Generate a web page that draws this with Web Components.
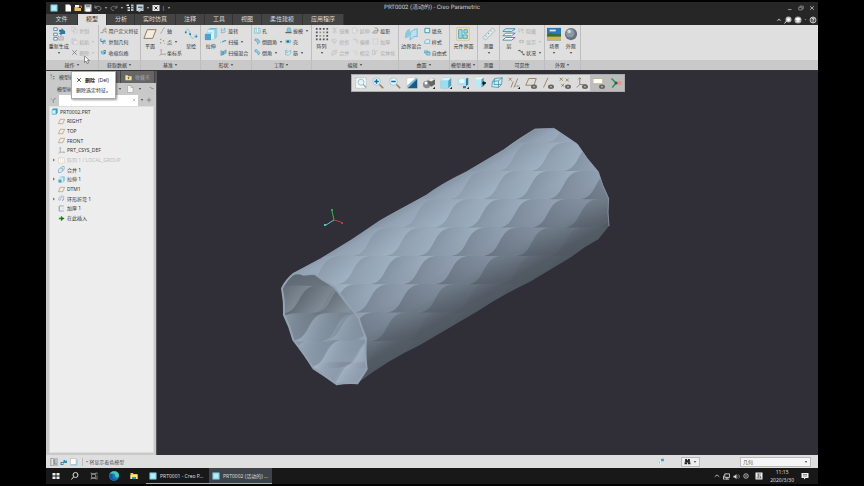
<!DOCTYPE html>
<html lang="zh-CN">
<head>
<meta charset="utf-8">
<title>PRT0002 (活动的) - Creo Parametric</title>
<style>
  html, body { margin: 0; height: 100%; background: #000; }
  body { font: 5px/8px "Noto Sans", "Noto Sans CJK SC", sans-serif; color: #333; }
</style>
</head>
<body>
<creo-app></creo-app>

<script>
// All icons share a 16x16 box.
const CUBE = '<path d="M1 5l4-4h10v10l-4 4H1z" fill="#4fa3c4"/><path d="M1 5l4-4h10l-4 4z" fill="#d9f3fa"/><path d="M1 5h10v10H1z" fill="#9adcf0"/>';
const EYE = '<ellipse cx="12" cy="13" rx="4" ry="3" fill="#666"/><circle cx="12" cy="13" r="1" fill="#ddd"/>';
const CORNER = '<path d="M16 13v3h-3z" fill="#222"/>';

const ICONS = {
  app: '<rect x="1" y="1" width="14" height="14" rx="1" fill="#8fdcf0"/><path d="M4 4h8v8H4z" fill="#b9ecf8"/>',
  part: '<path d="M2 4l3-3h10v10l-3 4H2z" fill="#2f8fb0"/><path d="M2 4h10v11H2z" fill="#8fd5ea"/><path d="M4 6h5v6H4z" fill="#d8f4fb"/>',
  new: '<path d="M3 1h8l3 3v11H3z" fill="#fff"/>',
  open: '<path d="M2 2h8v5H2z" fill="#fff"/><path d="M1 14V6h5l1 2h7v6z" fill="#f1bd63"/><path d="M10 4h5v4" stroke="#e77b2d" stroke-width="2" fill="none"/>',
  save: '<path d="M1 1h14v14H1z" fill="#cfcfcf"/><path d="M4 1h8v5H4z" fill="#8d8d8d"/><path d="M4 9h8v6H4z" fill="#fff"/>',
  undo: '<path d="M2 3v5h5M2 8c3-5 12-4 12 1 0 3-3 4-6 4" fill="none" stroke="#8b8b8b" stroke-width="2"/>',
  redo: '<path d="M14 3v5H9M14 8C11 3 2 4 2 9c0 3 3 4 6 4" fill="none" stroke="#747474" stroke-width="2"/>',
  regenTop: '<path d="M1 1h5v3H1zM3 6h5v3H3zM3 11h5v3H3z" fill="#cfe6ef"/><path d="M10 1h5v13h-5z" fill="#a9bfc9"/><path d="M10 5h5M10 9h5" stroke="#333"/>',
  windows: '<path d="M1 1h14v13H1z" fill="#cfd8df"/><path d="M4 5h9v3H4z" fill="#3a6e96"/><path d="M4 15l7-7 2 2-6 6z" fill="#f3f3f3" stroke="#555"/>',
  closewin: '<path d="M1 2h14v12H1z" fill="#e5e5e5"/><path d="M5 5l6 6M11 5l-6 6" stroke="#333" stroke-width="2"/>',
  min: '<path d="M3 12h9" stroke="#bbb" stroke-width="2"/>',
  max: '<path d="M5 6V3h9v7h-3M2 6h9v7H2z" fill="none" stroke="#999" stroke-width="2"/>',
  x: '<path d="M3 3l10 10M13 3L3 13" stroke="currentColor" stroke-width="2"/>',
  up: '<path d="M1 11l7-7 7 7-7-3z" fill="#bbb"/>',
  searchBall: '<circle cx="9" cy="7" r="6" fill="#bbb"/><circle cx="9" cy="7" r="3" fill="#fff"/><path d="M5 10l-4 5" stroke="#ddd" stroke-width="2"/>',
  ball: '<circle cx="8" cy="8" r="7" fill="#aaa"/><path d="M2 6l6-3 6 3-6 4z" fill="#fff"/><path d="M5 9v3h6V9" fill="#eee"/>',
  help: '<circle cx="8" cy="8" r="6" fill="#555" stroke="#bbb" stroke-width="2"/><path d="M6 6c0-3 5-2 4 0-1 1-2 1-2 3M8 11v2" fill="none" stroke="#fff" stroke-width="2"/>',
  regen: '<path d="M2 1h4v3H2zM2 7h4v3H2zM2 12h4v3H2z" fill="#fff" stroke="#54849b"/><path d="M7 11h6v4H7z" fill="#c9c9c9" stroke="#999" stroke-dasharray="1"/><path d="M8 5V3h3V1l3 3-3 2" fill="#2878a8"/><path d="M15 4v4h-4v2L8 7l3-2" fill="#2878a8"/>',
  copy: '<path d="M2 1h7v9H2zM6 5h8v9H6z" fill="#e6e6e6" stroke="#aaa"/>',
  paste: '<path d="M2 2h9v11H2z" fill="#d0d0d0" stroke="#aaa"/><path d="M6 6h8v9H6z" fill="#eee" stroke="#aaa"/>',
  del: '<path d="M3 3l10 10M13 3L3 13" stroke="#555" stroke-width="2"/>',
  udf: '<path d="M1 13h6V6h5" fill="none" stroke="#555" stroke-width="1"/><path d="M10 2l4 2-2 4" fill="none" stroke="#e28732" stroke-width="2"/><path d="M10 10h4v4" fill="none" stroke="#555"/>',
  copygeo: '<path d="M2 1v7h5v6" fill="none" stroke="#2f7fa3" stroke-width="2"/><path d="M8 5h4v4H8zM10 10l4 4" fill="#77bdd4" stroke="#2f7fa3"/>',
  shrink: '<path d="M2 3l5 3-1 7-4-3z" fill="#66b7d4"/><path d="M8 2l6 1-1 7-5 3z" fill="#2d8bb3"/><path d="M9 5l3-1v4z" fill="#d6f1fa"/>',
  plane: '<path d="M5 3h10l-4 10H1z" fill="#f2ece3" stroke="#8d6a43"/>',
  axis: '<path d="M4 15L12 1" stroke="#555" stroke-dasharray="5 1"/>',
  points: '<path d="M2 3h3M4 2v3M9 6h3M10 5v3M2 11h3M4 10v3M12 12h2" stroke="#8a6c46"/>',
  csys: '<path d="M5 1v11h10M5 12l-4 3" fill="none" stroke="#666"/><path d="M3 3l2-2 2 2M13 10l2 2-2 2" fill="none" stroke="#9a7448"/>',
  sketch: '<path d="M2 6c2-7 4-3 5 2s3 7 5 3 2-3 3 0" fill="none" stroke="#86c3dd" stroke-width="1"/><path d="M1 6h2M6 8h2M13 11h2" stroke="#2b7da3" stroke-width="2"/>',
  extrude: '<path d="M4 3l3-2h8v10l-3 3H4z" fill="#75bad4"/><path d="M4 3h8v11H4z" fill="#d8eff6"/><path d="M1 8h7v7H1z" fill="#49a5c8"/><path d="M1 8l2-2h7l-2 2z" fill="#9edced"/><path d="M12 3l3-2v9l-3 4z" fill="#96cddf"/>',
  revolve: '<path d="M3 2v12M3 7h5c6 0 6 6 0 6H3" fill="#b9e4f1" stroke="#4595b5"/><path d="M8 4l4-2v4z" fill="#4595b5"/>',
  sweep: '<path d="M1 9c4 3 7-4 13-3" stroke="#579cb8" stroke-width="3" fill="none"/><circle cx="3" cy="9" r="2" fill="#d3f0f8"/>',
  blend: '<path d="M2 4l5 2v7l-5 2zM7 6l7-4v7l-7 4z" fill="#75bfd8" stroke="#377f9f"/>',
  hole: '<path d="M1 3h13v11H1z" fill="#c9edf7" stroke="#4a9aba"/><path d="M6 3v8l2 2 2-2V3" fill="#fff" stroke="#4a9aba"/>',
  round: '<path d="M2 2h4c5 0 7 4 7 8L8 14C8 8 6 6 2 6z" fill="#8bcde2" stroke="#3b8fb0"/>',
  chamfer: '<path d="M2 2l4-1 8 8-4 5L8 9 2 6z" fill="#8bcde2" stroke="#3b8fb0"/>',
  draft: '<path d="M6 2h6l2 8H4z" fill="#8bcde2" stroke="#3b8fb0"/><path d="M1 13h14" stroke="#333" stroke-width="2"/>',
  shell: '<path d="M1 4h13v8H1z" fill="#7fc4dc"/><path d="M4 6h5v4H4z" fill="#1f617f"/>',
  rib: '<path d="M1 13V4l3-2v7l9-6v7l-5 4z" fill="#ccecf5" stroke="#4d93ae"/>',
  pattern: '<path d="M1 2h2M5 2h2M9 2h2M13 2h2M1 6h2M13 6h2M1 10h2M13 10h2M1 14h2M5 14h2M9 14h2M13 14h2" stroke="#555" stroke-width="2"/><path d="M5 6h2M9 6h2M5 10h2M9 10h2" stroke="#999" stroke-width="2"/>',
  mirror: '<path d="M8 1v14M2 3h4v9H2M14 3h-4v9h4" fill="none" stroke="#aaa"/>',
  trim: '<path d="M2 3h8l3 3-6 8V8H2z" fill="#d5d5d5" stroke="#aaa"/>',
  merge: '<path d="M1 9l5-6 4 2-3 8-5 2zM8 4l5-2 1 5-5 6" fill="#d5d5d5" stroke="#aaa"/>',
  extend: '<path d="M2 2h7v12H2z" fill="#eee" stroke="#aaa"/><path d="M9 8h5M12 6l2 2-2 2" stroke="#aaa" fill="none"/>',
  offset: '<path d="M2 3c6 0 10 3 10 10M6 2c5 0 8 4 8 8" fill="none" stroke="#aaa"/>',
  cross: '<path d="M2 3l11 11M9 3l3 5" stroke="#aaa" fill="none"/>',
  project: '<path d="M1 14l4-6h10l-4 6z" fill="#c7c7c7" stroke="#777"/><path d="M6 1c2 4 5-1 7 3v4" fill="none" stroke="#333"/>',
  thicken: '<path d="M3 2h10v12H3z" fill="none" stroke="#aaa" stroke-dasharray="2 1"/>',
  solidify: '<path d="M1 3h5v10H1zM8 12c0-7 2-8 6-8" fill="#ddd" stroke="#999"/>',
  boundary: '<path d="M1 13c0-6 1-9 5-11 2 2 1 6 0 8-1 3-3 2-5 3z" fill="#8cc9df"/><path d="M7 11c0-5 2-8 8-9v9c-4-1-5 1-8 4z" fill="#b8e4f1" stroke="#6db4ce"/>',
  fill: '<path d="M2 3h11v10H2z" fill="#d7f2f9" stroke="#3c8eae" stroke-width="2"/>',
  style: '<path d="M1 12c0-7 4-10 12-8v9z" fill="#c9ecf5" stroke="#3c8eae"/>',
  free: '<path d="M1 4h6l7 3v7H7L1 9z" fill="#9ed7e8" stroke="#348bad"/><path d="M7 4v10M1 8h13" stroke="#348bad"/>',
  iface: '<path d="M1 1h14v14H1z" fill="#fff1c9" stroke="#d9b876"/><path d="M3 3h4v10H3zM9 3h4v4H9zM8 9h5v4H8z" fill="#9adbe9" stroke="#4e9fb6"/>',
  measure: '<path d="M1 12L12 1l3 3L4 15z" fill="#dceaf0" stroke="#a5b5bd"/><path d="M4 10l1 1M7 7l1 1M10 4l1 1" stroke="#777"/>',
  layers: '<path d="M4 2h11l-4 3H1z" fill="#d9f2fa" stroke="#3187ab"/><path d="M4 7h11l-4 3H1zM4 12h11l-4 3H1z" fill="#fff" stroke="#3187ab"/>',
  hide: '<path d="M2 3v8h3M5 5h8M7 8h6" stroke="#888" fill="none"/><path d="M9 11l4 3" stroke="#888"/>',
  show: '<ellipse cx="8" cy="8" rx="6" ry="4" fill="#aaa"/><circle cx="8" cy="8" r="2" fill="#eee"/>',
  state: '<path d="M1 3h5v4h4v5h4" stroke="#444" fill="none"/><path d="M1 2h3v3H1zM8 5h3v3H8zM12 11h3v3h-3z" fill="#555"/>',
  scene: '<path d="M0 1h16v14H0z" fill="#2f78b8"/><path d="M0 9c5-5 10 2 16-2v8H0z" fill="#3d6c3a"/><path d="M0 11h16v4H0z" fill="#d0b64c"/><path d="M3 3h7v2H3z" fill="#d8edf9"/>',
  sphere: '<circle cx="8" cy="8" r="7" fill="#68717b"/><circle cx="7" cy="7" r="5" fill="#8d98a5"/><circle cx="6" cy="5" r="2" fill="#cfd7df"/>',
  tree: '<path d="M3 2v11h4M3 7h4" stroke="#888" fill="none"/><path d="M1 1h4v3H1zM8 5h4v3H8zM8 11h4v3H8z" fill="#777"/>',
  fav: '<path d="M1 3h5l1 2h8v9H1z" fill="#f6e7a9"/><path d="M8 6l1 2h2l-2 2 1 3-2-2-2 2 1-3-2-2h2z" fill="#765b1c"/>',
  page: '<path d="M3 1h7l4 4v10H3z" fill="#f4f4f4" stroke="#999"/><path d="M10 1v4h4" fill="#ccc" stroke="#999"/>',
  funnel: '<path d="M1 2h13l-5 6v6l-3-2V8z" fill="#999"/><path d="M3 3h6L7 6z" fill="#eee"/>',
  plus: '<path d="M8 2v12M2 8h12" stroke="#777" stroke-width="2"/>',
  handle: '<path d="M2 4l5 1 1 3h6v3" stroke="#777" fill="none" stroke-width="2"/>',
  group: '<path d="M1 2h13v12H1z" fill="#fff" stroke="#c9b7a0"/><path d="M5 5h1M10 5h1M5 10h1M10 10h1" stroke="#c29c6b" stroke-width="2"/>',
  joined: '<path d="M1 8l4-3h5v6l-3 4H1z" fill="#d4eef7" stroke="#337fa3"/><path d="M6 4l3-3h5v7l-4 3" fill="none" stroke="#337fa3"/>',
  toroid: '<path d="M2 12C0 4 8-1 14 4l-3 3C8 3 5 7 6 11z" fill="#e7edf5" stroke="#6b87ab"/><path d="M9 12c3 1 4-1 4-4" fill="none" stroke="#6b87ab" stroke-width="2"/>',
  thick: '<path d="M3 2h10M3 14h10" stroke="#9aa9ba" stroke-width="2"/><path d="M3 2v12" stroke="#9aa9ba" stroke-width="3"/><path d="M12 3v10" stroke="#aaa" stroke-dasharray="2"/>',
  insert: '<path d="M8 3v10M2 8h12" stroke="#2a8e1d" stroke-width="3"/><path d="M8 4l5 4-5 4z" fill="#176b10"/>',
  zoomfit: '<path d="M1 1h14v14H1z" fill="#f7f7f7" stroke="#9fb6c2" stroke-dasharray="2 1"/><circle cx="8" cy="7" r="4" fill="#e4f4f9" stroke="#8fb2c2"/><path d="M11 10l4 4" stroke="#8fb2c2" stroke-width="2"/>',
  zoomin: '<circle cx="6" cy="6" r="5" fill="#e7f6fb" stroke="#8fc0d6"/><path d="M3 6h6M6 3v6" stroke="#176b95" stroke-width="2"/><path d="M10 10l5 5" stroke="#a47849" stroke-width="2"/>',
  zoomout: '<circle cx="6" cy="6" r="5" fill="#e7f6fb" stroke="#8fc0d6"/><path d="M3 6h6" stroke="#176b95" stroke-width="2"/><path d="M10 10l5 5" stroke="#a47849" stroke-width="2"/>',
  repaint: '<path d="M1 1h14v14H1z" fill="#fff" stroke="#ccc"/><path d="M15 2v13H2z" fill="#1c5a80"/><path d="M13 1l2 1L5 12l-4 3 1-4z" fill="#78c0dc"/>',
  shading: '<circle cx="5" cy="10" r="5" fill="#8a8a8a"/><circle cx="4" cy="8" r="2" fill="#fff"/><path d="M6 4l5-3 5 2v7l-5 3-3-3z" fill="#666"/><path d="M6 4l5-3 5 2-5 3z" fill="#e9e9e9"/>' + CORNER,
  saved: CUBE + CORNER,
  views: '<path d="M1 2h11v9H1z" fill="#a6e2f2"/><path d="M12 2l3-1v9l-3 2zM8 12h4v3H8z" fill="#287ea3"/><path d="M3 3h7v5H3z" fill="#e6f9fd"/>' + CORNER,
  views2: '<path d="M1 3h9v11H1z" fill="#b8e9f5"/><path d="M1 3l3-2h9l-3 2z" fill="#e9fafd"/><path d="M10 3l3-2v11l-3 2z" fill="#4ba0c1"/><path d="M13 6v5M11 8h5" stroke="#111" stroke-width="2"/>',
  persp: '<path d="M2 6l3-4 10-1-1 9-4 4-9-1z" fill="#c7edf7" stroke="#458fac"/><path d="M2 6l8-1v9M5 2l-1 8 10 0M10 5l5-4" fill="none" stroke="#458fac"/>',
  datum: '<path d="M1 1l4 4M5 1L1 5M4 14l3-8M8 14l5-12" stroke="#8f704b"/><path d="M10 12h5" stroke="#333" stroke-dasharray="1"/>' + CORNER,
  planeEye: '<path d="M5 2h10l-3 9H1z" fill="none" stroke="#8f6b43"/>' + EYE,
  axisEye: '<path d="M2 14L8 1" stroke="#8f6b43"/>' + EYE,
  ptEye: '<path d="M1 1l4 4M5 1L1 5M9 2l4 4M13 2L9 6M3 9l4 4M7 9l-4 4" stroke="#8f6b43"/>' + EYE,
  csysEye: '<path d="M5 1v9h9M5 10l-4 4M3 3l2-2 2 2" stroke="#8f6b43" fill="none"/>' + EYE,
  noteEye: '<path d="M0 2h13v7H0z" fill="#fffdf0" stroke="#b7aa88"/>' + EYE,
  spin: '<path d="M8 8L2 2M8 8l-5 6" stroke="#289657" stroke-width="2"/><path d="M8 8h5" stroke="#a04848" stroke-width="2"/><circle cx="8" cy="8" r="2" fill="#41544a"/><circle cx="13" cy="8" r="3" fill="#e99494"/>',
  navpane: '<path d="M2 1h5v14H2z" fill="#d7e4e9" stroke="#888"/><path d="M9 3v9h5" fill="none" stroke="#666"/>',
  browser: '<path d="M1 8h6v6H1zM7 4h7v6H7z" fill="#2b8bb1"/><path d="M9 3l6-2-3 6zM3 10h3v2H3z" fill="#c8eaf5"/>',
  full: '<path d="M1 1h11v12H1z" fill="#fff" stroke="#aaa"/><path d="M1 14h13V3" fill="none" stroke="#8cc8df" stroke-width="2"/>',
  hourglass: '<path d="M2 4h7v10H2z" fill="#e7f4f8" stroke="#bcd"/><path d="M9 2h4v4H9zM5 7v4" stroke="#2879a0" fill="#5eabc7"/>',
  binoc: '<path d="M3 2h4v3h2V2h4l2 12H9v-4H7v4H1z" fill="#222"/><path d="M4 8h1v3H4zM11 8h1v3h-1z" fill="#ddd"/>',
  start: '<path d="M1 2h6v5H1zM9 2h6v5H9zM1 9h6v5H1zM9 9h6v5H9z" fill="#eee"/>',
  find: '<circle cx="9" cy="6" r="5" fill="none" stroke="#ddd" stroke-width="2"/><path d="M5 10l-4 5" stroke="#ddd" stroke-width="2"/>',
  taskview: '<path d="M3 5h8v6H3zM2 1v2h10V1M2 15v-2h10v2M14 1v4M14 7v8" fill="none" stroke="#ddd" stroke-width="1"/>',
  edge: '<circle cx="8" cy="8" r="8" fill="#187ab8"/><path d="M1 5C4-2 16-1 16 7c0 4-5 4-6 2 1-5-6-7-9-4z" fill="#42cdae"/><path d="M6 7c-3 5 3 8 7 6-5 5-13 0-12-7 2-2 5-2 5 1z" fill="#1856a0"/>',
  folder: '<path d="M1 2h5l1 2h8v10H1z" fill="#f5c84e"/><path d="M1 6h14v8H1z" fill="#ffe38a"/><path d="M4 10h8v4H4z" fill="#3e89c7"/>',
  chev: '<path d="M2 10l6-5 6 5" fill="none" stroke="#ddd" stroke-width="2"/>',
  net: '<path d="M4 2h11v8H4zM9 10v4M5 14h9M1 6v8h3" fill="none" stroke="#ddd" stroke-width="2"/>',
  sound: '<path d="M1 6h3l4-4v12l-4-4H1z" fill="#ddd"/><path d="M10 5c2 2 2 4 0 6M12 3c4 3 4 7 0 10" stroke="#ddd" fill="none"/>',
  shield: '<circle cx="8" cy="8" r="6" fill="none" stroke="#ddd" stroke-width="2"/><path d="M5 5l6 6M11 5l-6 6" stroke="#ddd"/>',
  ime: '<path d="M1 1h14v14H1z" fill="#eee"/><path d="M4 4h8M7 4l-1 8M5 8h6v4M3 12h10" stroke="#222" fill="none" stroke-width="1"/>',
  notice: '<path d="M1 2h14v10H9l-3 3v-3H1z" fill="#eee"/><path d="M4 5h8M4 8h8" stroke="#333"/>',
  triR: '<path d="M4 2l8 6-8 6z" fill="#777"/>',
  caret: '<path d="M3 5h10l-5 6z" fill="currentColor"/>',
  cursor: '<path d="M3 0v13l3-3 2 5 3-1-2-5h4z" fill="#fff" stroke="#333"/>'
};

const BUTTON = 'button { all: unset; box-sizing: border-box; cursor: default; }';

class BaseElement extends HTMLElement {
  constructor() {
    super();
    this.attachShadow({ mode: 'open' });
  }

  connectedCallback() {
    this.shadowRoot.innerHTML = this.render();
  }
}

class UiIcon extends BaseElement {
  render() {
    const size = this.getAttribute('size') || 8;
    return `
      <style>
        :host { display: block; flex: none; width: ${size}px; height: ${size}px; }
        svg { display: block; width: 100%; height: 100%; }
      </style>
      <svg viewBox="0 0 16 16" aria-hidden="true">${ICONS[this.getAttribute('name')]}</svg>`;
  }
}
customElements.define('ui-icon', UiIcon);

class IconButton extends BaseElement {
  render() {
    const pressed = this.hasAttribute('pressed');
    return `
      <style>
        :host { display: block; flex: none; }
        ${BUTTON}
        button { display: block; padding: var(--pad, 0); ${pressed ? 'background: #bcbcbc;' : ''} }
      </style>
      <button aria-label="${this.getAttribute('label')}">
        <ui-icon name="${this.getAttribute('name')}" size="${this.getAttribute('size') || 8}"></ui-icon>
      </button>`;
  }
}
customElements.define('icon-button', IconButton);

class RibbonTab extends BaseElement {
  render() {
    const active = this.hasAttribute('active');
    return `
      <style>
        :host { display: block; }
        ${BUTTON}
        button {
          height: 11px; width: 100%; padding: 0 8px; text-align: center;
          font-size: 6px; line-height: 11px; white-space: nowrap;
          color: ${active ? '#333' : '#ddd'};
          background: ${active ? '#dfdfdf' : '#444'};
          border-right: 1px solid #333;
        }
      </style>
      <button role="tab" aria-selected="${active}"><slot></slot></button>`;
  }
}
customElements.define('ribbon-tab', RibbonTab);

class RibbonGroup extends BaseElement {
  render() {
    return `
      <style>
        :host { display: flex; flex-direction: column; flex: none; box-sizing: border-box; border-right: 1px solid #bebebe; }
        .tools { display: flex; height: 35px; justify-content: space-evenly; }
        .name {
          display: flex; align-items: center; justify-content: center; gap: 1px;
          height: 10px; background: #c9c9c9; white-space: nowrap;
        }
      </style>
      <div class="tools"><slot></slot></div>
      <div class="name">${this.getAttribute('label')}
        ${this.hasAttribute('plain') ? '' : '<ui-icon name="caret" size="4"></ui-icon>'}
      </div>`;
  }
}
customElements.define('ribbon-group', RibbonGroup);

class ToolColumn extends BaseElement {
  render() {
    return `
      <style>:host { display: grid; grid-template-rows: repeat(3, 11px); flex: none; }</style>
      <slot></slot>`;
  }
}
customElements.define('tool-column', ToolColumn);

class ToolButton extends BaseElement {
  render() {
    const big = this.hasAttribute('big');
    const caret = this.hasAttribute('menu') ? '<ui-icon name="caret" size="4"></ui-icon>' : '';
    return `
      <style>
        :host { display: block; flex: none; }
        ${BUTTON}
        button { display: flex; align-items: center; white-space: nowrap; }
        .small { height: 11px; gap: 1px; }
        .big { flex-direction: column; padding-top: 2px; gap: 1px; }
        .big span { line-height: 8px; }
        .small ui-icon[size="4"] { margin-left: 1px; }
        button:disabled { color: #aaa; }
        button:disabled ui-icon { opacity: .7; }
      </style>
      <button class="${big ? 'big' : 'small'}" ${this.hasAttribute('off') ? 'disabled' : ''}>
        <ui-icon name="${this.getAttribute('icon')}" size="${big ? 14 : 7}"></ui-icon>
        <span><slot></slot></span>${caret}
      </button>`;
  }
}
customElements.define('tool-button', ToolButton);

class TitleBar extends BaseElement {
  render() {
    return `
      <style>
        :host { display: grid; grid-template-columns: 1fr auto 1fr; align-items: center; height: 12px; color: #ccc; background: #262626; }
        div { display: flex; align-items: center; gap: 2px; }
        .title { font: 6px/12px Roboto, "Noto Sans CJK SC", sans-serif; text-rendering: geometricPrecision; }
        .quick { padding-left: 4px; }
        .gap { margin-right: 4px; }
        .win { justify-content: flex-end; gap: 5px; padding-right: 3px; }
      </style>
      <div class="quick">
        <ui-icon class="gap" name="app"></ui-icon>
        <icon-button name="new" label="新建"></icon-button>
        <icon-button name="open" label="打开"></icon-button>
        <icon-button name="save" label="保存"></icon-button>
        <icon-button name="undo" label="撤消"></icon-button><ui-icon name="caret" size="4"></ui-icon>
        <icon-button name="redo" label="重做"></icon-button><ui-icon name="caret" size="4"></ui-icon>
        <icon-button name="regenTop" label="重新生成"></icon-button>
        <icon-button name="windows" label="窗口"></icon-button><ui-icon name="caret" size="4"></ui-icon>
        <icon-button name="closewin" label="关闭窗口"></icon-button>
        <span>|</span><ui-icon name="caret" size="4"></ui-icon>
      </div>
      <span class="title">PRT0002 (活动的) - Creo Parametric</span>
      <div class="win">
        <icon-button name="min" size="6" label="最小化"></icon-button>
        <icon-button name="max" size="6" label="还原"></icon-button>
        <icon-button name="x" size="6" label="关闭"></icon-button>
      </div>`;
  }
}
customElements.define('title-bar', TitleBar);

class RibbonBar extends BaseElement {
  render() {
    return `
      <style>
        :host { display: block; background: #262626; border-bottom: 1px solid #333; }
        nav { display: flex; align-items: center; height: 11px; }
        .right { display: flex; align-items: center; gap: 2px; margin-left: auto; padding-right: 1px; }
        .groups { display: flex; background: linear-gradient(#dfdfdf 35px, #c9c9c9 35px); }
        .w22 { width: 22px; } .w28 { width: 28px; } .w29 { width: 29px; } .w32 { width: 32px; } .w36 { width: 36px; }
        .w42 { width: 42px; } .w45 { width: 45px; } .w51 { width: 51px; }
        .w53 { width: 53px; } .w60 { width: 60px; } .w87 { width: 87px; }
      </style>
      <nav role="tablist">
        <ribbon-tab class="w32">文件</ribbon-tab>
        <ribbon-tab class="w29" active>模型</ribbon-tab>
        <ribbon-tab class="w28">分析</ribbon-tab>
        <ribbon-tab>实时仿真</ribbon-tab>
        <ribbon-tab class="w29">注释</ribbon-tab>
        <ribbon-tab class="w28">工具</ribbon-tab>
        <ribbon-tab class="w29">视图</ribbon-tab>
        <ribbon-tab>柔性建模</ribbon-tab>
        <ribbon-tab>应用程序</ribbon-tab>
        <div class="right">
          <icon-button name="up" size="6" label="最小化功能区"></icon-button>
          <icon-button name="searchBall" label="命令搜索"></icon-button>
          <icon-button name="ball" label="学习连接器"></icon-button>
          <ui-icon name="caret" size="3" style="color:#999"></ui-icon>
          <icon-button name="help" label="帮助"></icon-button>
        </div>
      </nav>
      <div class="groups">
        <ribbon-group class="w53" label="操作">
          <tool-button big icon="regen" menu>重新生成</tool-button>
          <tool-column>
            <tool-button icon="copy" off>复制</tool-button>
            <tool-button icon="paste" off menu>粘贴</tool-button>
            <tool-button icon="del" off menu>删除</tool-button>
          </tool-column>
        </ribbon-group>
        <ribbon-group class="w42" label="获取数据">
          <tool-column>
            <tool-button icon="udf">用户定义特征</tool-button>
            <tool-button icon="copygeo">复制几何</tool-button>
            <tool-button icon="shrink">收缩包络</tool-button>
          </tool-column>
        </ribbon-group>
        <ribbon-group class="w60" label="基准">
          <tool-button big icon="plane">平面</tool-button>
          <tool-column>
            <tool-button icon="axis">轴</tool-button>
            <tool-button icon="points" menu>点</tool-button>
            <tool-button icon="csys">坐标系</tool-button>
          </tool-column>
          <tool-button big icon="sketch">草绘</tool-button>
        </ribbon-group>
        <ribbon-group class="w51" label="形状">
          <tool-button big icon="extrude">拉伸</tool-button>
          <tool-column>
            <tool-button icon="revolve">旋转</tool-button>
            <tool-button icon="sweep" menu>扫描</tool-button>
            <tool-button icon="blend">扫描混合</tool-button>
          </tool-column>
        </ribbon-group>
        <ribbon-group class="w60" label="工程">
          <tool-column>
            <tool-button icon="hole">孔</tool-button>
            <tool-button icon="round" menu>倒圆角</tool-button>
            <tool-button icon="chamfer" menu>倒角</tool-button>
          </tool-column>
          <tool-column>
            <tool-button icon="draft" menu>拔模</tool-button>
            <tool-button icon="shell">壳</tool-button>
            <tool-button icon="rib" menu>筋</tool-button>
          </tool-column>
        </ribbon-group>
        <ribbon-group class="w87" label="编辑">
          <tool-button big icon="pattern" menu>阵列</tool-button>
          <tool-column>
            <tool-button icon="mirror" off>镜像</tool-button>
            <tool-button icon="trim" off>修剪</tool-button>
            <tool-button icon="merge" off>合并</tool-button>
          </tool-column>
          <tool-column>
            <tool-button icon="extend" off>延伸</tool-button>
            <tool-button icon="offset" off>偏移</tool-button>
            <tool-button icon="cross" off>相交</tool-button>
          </tool-column>
          <tool-column>
            <tool-button icon="project">投影</tool-button>
            <tool-button icon="thicken" off>加厚</tool-button>
            <tool-button icon="solidify" off>实体化</tool-button>
          </tool-column>
        </ribbon-group>
        <ribbon-group class="w51" label="曲面">
          <tool-button big icon="boundary">边界混合</tool-button>
          <tool-column>
            <tool-button icon="fill">填充</tool-button>
            <tool-button icon="style">样式</tool-button>
            <tool-button icon="free">自由式</tool-button>
          </tool-column>
        </ribbon-group>
        <ribbon-group class="w28" label="模型意图">
          <tool-button big icon="iface">元件界面</tool-button>
        </ribbon-group>
        <ribbon-group class="w22" label="测量" plain>
          <tool-button big icon="measure" menu>测量</tool-button>
        </ribbon-group>
        <ribbon-group class="w45" label="可见性" plain>
          <tool-button big icon="layers">层</tool-button>
          <tool-column>
            <tool-button icon="hide" off>隐藏</tool-button>
            <tool-button icon="show" off menu>显示</tool-button>
            <tool-button icon="state" menu>状况</tool-button>
          </tool-column>
        </ribbon-group>
        <ribbon-group class="w36" label="外观">
          <tool-button big icon="scene" menu>场景</tool-button>
          <tool-button big icon="sphere" menu>外观</tool-button>
        </ribbon-group>
      </div>`;
  }
}
customElements.define('ribbon-bar', RibbonBar);

class TreeItem extends BaseElement {
  render() {
    const root = this.hasAttribute('root');
    return `
      <style>
        :host { display: flex; align-items: center; gap: 2px; padding-left: ${root ? 1 : 2}px; white-space: nowrap; color: ${this.hasAttribute('off') ? '#bbb' : '#333'}; }
        .arrow { width: 4px; }
      </style>
      ${root ? '' : `<span class="arrow">${this.hasAttribute('open') ? '<ui-icon name="triR" size="4"></ui-icon>' : ''}</span>`}
      <ui-icon name="${this.getAttribute('icon')}" size="7"></ui-icon>
      <span><slot></slot></span>`;
  }
}
customElements.define('tree-item', TreeItem);

class ModelTree extends BaseElement {
  render() {
    return `
      <style>
        :host { display: flex; flex-direction: column; width: 111px; flex: none; background: #c9c9c9; box-sizing: border-box; border-right: 1px solid #555; }
        .tabs { display: flex; height: 12px; background: #555; }
        ${BUTTON}
        .tab { display: flex; align-items: center; flex: none; gap: 3px; padding: 0 4px; color: #aaa; background: #666; border-right: 1px solid #444; white-space: nowrap; }
        .tab.on { background: #c9c9c9; color: #333; }
        .mid { width: 42px; }
        .head, .search { display: flex; align-items: center; height: 11px; }
        .head { padding-left: 11px; gap: 4px; }
        .head span { width: 57px; }
        .head .end { margin-left: auto; padding-right: 2px; }
        .search { padding: 0 4px; gap: 2px; height: 12px; }
        label { display: flex; align-items: center; flex: 1; min-width: 0; height: 11px; padding-right: 2px; background: #fff; }
        input { flex: 1; min-width: 0; width: 0; height: 10px; padding: 0 2px; border: 0; background: none; font: inherit; outline: none; }
        .tree { flex: 1; margin: 0 2px 2px 3px; background: #ededed; border: 1px solid #ddd; box-sizing: border-box; }
        .list { display: grid; grid-auto-rows: 1fr; height: 116px; }
      </style>
      <div class="tabs">
        <button class="tab on"><ui-icon name="tree" size="6"></ui-icon>模型树</button>
        <button class="tab mid" aria-label="文件夹浏览器"></button>
        <button class="tab"><ui-icon name="fav" size="7"></ui-icon>收藏夹</button>
      </div>
      <div class="head">
        <span>模型树</span>
        <ui-icon name="caret" size="4"></ui-icon>
        <icon-button name="page" label="显示"></icon-button>
        <ui-icon name="caret" size="4"></ui-icon>
        <ui-icon class="end" name="handle" size="5"></ui-icon>
      </div>
      <div class="search">
        <ui-icon name="funnel" size="7"></ui-icon>
        <label><input type="text" aria-label="过滤模型树"><ui-icon name="x" size="4" style="color:#888"></ui-icon></label>
        <ui-icon name="caret" size="4"></ui-icon>
        <icon-button name="plus" size="6" label="添加"></icon-button>
      </div>
      <div class="tree">
        <div class="list">
          <tree-item root icon="part">PRT0002.PRT</tree-item>
          <tree-item icon="plane">RIGHT</tree-item>
          <tree-item icon="plane">TOP</tree-item>
          <tree-item icon="plane">FRONT</tree-item>
          <tree-item icon="csys">PRT_CSYS_DEF</tree-item>
          <tree-item icon="group" open off>阵列 1 / LOCAL_GROUP</tree-item>
          <tree-item icon="joined">合并 1</tree-item>
          <tree-item icon="extrude" open>拉伸 1</tree-item>
          <tree-item icon="plane">DTM1</tree-item>
          <tree-item icon="toroid" open>环形折弯 1</tree-item>
          <tree-item icon="thick">加厚 1</tree-item>
          <tree-item icon="insert">在此插入</tree-item>
        </div>
      </div>`;
  }
}
customElements.define('model-tree', ModelTree);

// brightness of the tube across its width, s is measured square to the axis
const SHADES = [[415, 140], [450, 160], [520, 170], [590, 165], [650, 152], [700, 132], [745, 104], [775, 89], [815, 84]];

// facet contrast: weak near both silhouettes
const DEPTHS = [[415, 4], [480, 14], [530, 24], [600, 38], [700, 38], [750, 18], [790, 3]];

function lookup(table, s) {
  let i = 1;
  while (i < table.length - 1 && table[i][0] < s) i += 1;
  const [s0, v0] = table[i - 1];
  const [s1, v1] = table[i];
  const t = Math.min(1, Math.max(0, (s - s0) / (s1 - s0)));
  return v0 + (v1 - v0) * t;
}

function grey(v) {
  return `rgb(${Math.round(v * 0.94)},${Math.round(v * 1.04)},${Math.round(v * 1.15)})`;
}

const TUBE = 'M70 460L152 416Q245 362 330 302L360 285L470 225Q510 194 590 155L700 90Q740 60 795 27L852 25L922 72Q950 117 985 155Q996 195 1016 235Q1012 280 1017 318';
const MOUTH = 'M70 462Q85 456 100 464L133 461Q160 482 192 500Q214 528 235 556Q255 578 265 592Q276 628 288 655Q284 700 290 748L262 790Q232 787 200 793Q170 770 130 745Q105 705 70 660Q60 620 42 585Q44 545 36 505Q48 480 70 462z';

class ModelView extends BaseElement {
  // one facet between two S curves, its lower left tip at x,y
  facet(x, y, fill, opacity = 1) {
    return `<path transform="translate(${x} ${y})" fill="${fill}" opacity="${opacity}" d="M-8 0C44-5 32-78 88-84Q132-89 182-84C136-78 142-14 98-5Q54 3-8 0z"/>`;
  }

  // the shade fades towards the lower right of each facet, over the smooth body
  outside() {
    let out = '';
    for (let j = 6; j >= -3; j -= 1) {
      for (let i = 11; i >= -6; i -= 1) {
        const x = 262 + i * 98 + j * 47;
        const y = 577 - j * 85;
        const s = (x + 90) * 0.498 + (y - 42) * 0.867;
        if (s > 400 && s < 840 && x > 40 && x < 1020) {
          const opacity = lookup(DEPTHS, s) / lookup(SHADES, s);
          out += this.facet(x, y, 'url(#shade)', opacity.toFixed(2));
        }
      }
    }
    return out;
  }

  inside() {
    const rows = [
      [132, 580, 'back'], [44, 583, 'back'], [-50, 583, 'back'],
      [160, 664, 'glow'], [76, 664, 'glow'], [-20, 664, 'glow'],
      [220, 745, 'glow'], [126, 745, 'glow'], [30, 745, 'glow'],
      [160, 812, 'glow'], [70, 812, 'glow']
    ];
    return rows.map(([x, y, kind]) => this.facet(x, y, `url(#${kind})`)).join('');
  }

  render() {
    const stops = SHADES.map(([s, v]) => `<stop offset="${(s - 415) / 400}" stop-color="${grey(v)}"/>`).join('');
    const across = 'gradientUnits="userSpaceOnUse" x1="40" y1="-68" x2="122" y2="-18"';
    return `
      <style>
        :host { display: block; position: relative; flex: 1; min-width: 0; background: #302e37; }
        .scene { position: absolute; inset: 0; width: 100%; height: 100%; }
        .bar { position: relative; display: flex; width: max-content; max-width: 100%; margin: 3px auto 0; background: #dcdcdc; border: 1px solid #aaa; }
        .bar icon-button { --pad: 2px 2px 2px 3px; }
      </style>
      <svg class="scene" viewBox="157 71 661 384">
        <defs>
          <linearGradient id="body" gradientUnits="userSpaceOnUse" x1="207" y1="360" x2="406" y2="707">${stops}</linearGradient>
          <linearGradient id="hollow" gradientUnits="userSpaceOnUse" x1="90" y1="460" x2="200" y2="740"><stop stop-color="#5e6972"/><stop offset=".35" stop-color="#717d88"/><stop offset=".6" stop-color="#8494a3"/><stop offset="1" stop-color="#9dadbf"/></linearGradient>
          <linearGradient id="shade" ${across}><stop stop-color="#1c2126"/><stop offset="1" stop-color="#1c2126" stop-opacity="0"/></linearGradient>
          <linearGradient id="back" ${across}><stop stop-color="#4a5058" stop-opacity=".4"/><stop offset="1" stop-color="#9aa5b0" stop-opacity=".4"/></linearGradient>
          <linearGradient id="glow" ${across}><stop stop-color="#b9c9da" stop-opacity=".5"/><stop offset="1" stop-color="#56616b" stop-opacity=".25"/></linearGradient>
          <clipPath id="tube"><path d="${TUBE}L985 358Q940 382 905 410L780 485Q700 523 620 575L450 675Q350 722 262 790L200 793L130 745L36 505z"/></clipPath>
          <clipPath id="mouth"><path d="${MOUTH}"/></clipPath>
        </defs>
        <g transform="translate(270 120) scale(.33333)">
          <g clip-path="url(#tube)">
            <path d="M0 0h1050v810H0z" fill="url(#body)"/>
            ${this.outside()}
          </g>
          <path d="${TUBE}" fill="none" stroke="#a3b1c1" stroke-width="2"/>
          <g clip-path="url(#mouth)">
            <path d="M0 400h400v400H0z" fill="url(#hollow)"/>
            ${this.inside()}
          </g>
          <path d="${MOUTH}" fill="none" stroke="#93a3b2" stroke-width="6"/>
        </g>
        <g fill="none">
          <path d="M334 220L332 211" stroke="#35b455"/><path d="M334 220L341 222" stroke="#c23b44"/><path d="M334 220L326 225" stroke="#5cc9c9"/>
        </g>
        <circle cx="332" cy="210" r="1" fill="#45c565"/><circle cx="342" cy="223" r="1" fill="#e0404a"/><circle cx="325" cy="225" r="1" fill="#7fe8e8"/>
      </svg>
      <div class="bar" role="toolbar">
        <icon-button size="12" name="zoomfit" label="重新调整"></icon-button>
        <icon-button size="12" name="zoomin" label="放大"></icon-button>
        <icon-button size="12" name="zoomout" label="缩小"></icon-button>
        <icon-button size="12" name="repaint" label="重画"></icon-button>
        <icon-button size="12" name="shading" label="显示样式"></icon-button>
        <icon-button size="12" name="saved" label="已保存方向"></icon-button>
        <icon-button size="12" name="views" label="视图管理器"></icon-button>
        <icon-button size="12" name="views2" label="视图法向"></icon-button>
        <icon-button size="12" name="persp" label="透视图"></icon-button>
        <icon-button size="12" name="datum" label="基准显示过滤器"></icon-button>
        <icon-button size="12" name="planeEye" label="平面显示"></icon-button>
        <icon-button size="12" name="axisEye" label="轴显示"></icon-button>
        <icon-button size="12" name="ptEye" label="点显示"></icon-button>
        <icon-button size="12" name="csysEye" label="坐标系显示"></icon-button>
        <icon-button size="12" name="noteEye" pressed label="注释显示"></icon-button>
        <icon-button size="12" name="spin" pressed label="旋转中心"></icon-button>
      </div>`;
  }
}
customElements.define('model-view', ModelView);

class StatusBar extends BaseElement {
  render() {
    return `
      <style>
        :host { display: flex; align-items: center; gap: 2px; height: 13px; padding: 0 7px 0 4px; box-sizing: border-box; background: #dfdfdf; }
        .message { margin-left: 2px; padding-left: 3px; border-left: 1px solid #bbb; flex: 1; color: #555; }
        .find { display: flex; align-items: center; gap: 2px; height: 10px; margin: 0 38px 0 14px; padding: 0 2px; background: #eee; border: 1px solid #bbb; box-sizing: border-box; }
        .pick { display: flex; align-items: center; width: 71px; height: 10px; box-sizing: border-box; background: #f5f5f5; border: 1px solid #bbb; padding-right: 2px; }
        select { flex: 1; appearance: none; border: 0; background: none; padding: 0 2px; font: inherit; color: #555; outline: none; }
      </style>
      <icon-button name="navpane" pressed label="导航器"></icon-button>
      <icon-button name="browser" label="浏览器"></icon-button>
      <icon-button name="full" label="全屏"></icon-button>
      <span class="message">• 将显示着色模型</span>
      <ui-icon name="hourglass"></ui-icon>
      <div class="find"><icon-button name="binoc" size="7" label="查找"></icon-button><ui-icon name="caret" size="4"></ui-icon></div>
      <label class="pick"><select aria-label="选择过滤器"><option>几何</option></select><ui-icon name="caret" size="4"></ui-icon></label>`;
  }
}
customElements.define('status-bar', StatusBar);

class TaskBar extends BaseElement {
  render() {
    return `
      <style>
        :host { display: flex; align-items: stretch; height: 16px; background: #181818; color: #ddd; }
        ${BUTTON}
        .pins, .tray { display: flex; align-items: center; }
        .pins { gap: 11px; padding: 0 8px 0 6px; }
        .task { display: flex; align-items: center; gap: 3px; width: 63px; padding: 0 3px; border-bottom: 1px solid #7fb6d8; white-space: nowrap; }
        .task.on { background: #3d4348; }
        .tray { margin-left: auto; gap: 3px; padding-right: 9px; }
        .clock { margin: 0 4px; text-align: center; }
      </style>
      <div class="pins">
        <icon-button name="start" label="开始"></icon-button>
        <icon-button name="find" label="搜索"></icon-button>
        <icon-button name="taskview" label="任务视图"></icon-button>
        <icon-button name="edge" size="10" label="Microsoft Edge"></icon-button>
        <icon-button name="folder" label="文件资源管理器"></icon-button>
      </div>
      <button class="task"><ui-icon name="app"></ui-icon>PRT0001 - Creo P...</button>
      <button class="task on"><ui-icon name="app"></ui-icon>PRT0002 (活动的) ...</button>
      <div class="tray">
        <icon-button name="chev" size="6" label="显示隐藏的图标"></icon-button>
        <ui-icon name="net" size="7"></ui-icon>
        <ui-icon name="sound" size="7"></ui-icon>
        <ui-icon name="shield" size="6"></ui-icon>
        <ui-icon name="ime" size="8" style="margin-left:3px"></ui-icon>
        <div class="clock"><div>11:15</div><div>2020/3/30</div></div>
        <icon-button name="notice" label="通知"></icon-button>
      </div>`;
  }
}
customElements.define('task-bar', TaskBar);

class ToolTip extends BaseElement {
  render() {
    return `
      <style>
        :host { display: block; padding: 4px 4px 5px; background: #fff; border: 1px solid #aaa; box-shadow: 1px 1px 2px #0006; white-space: nowrap; color: #222; box-sizing: border-box; }
        .title { display: flex; align-items: center; gap: 3px; }
        p { margin: 2px 0 0; }
      </style>
      <div class="title"><ui-icon name="x" size="6"></ui-icon><b>删除</b><span>(Del)</span></div>
      <p><slot></slot></p>`;
  }
}
customElements.define('tool-tip', ToolTip);

class CreoApp extends BaseElement {
  render() {
    return `
      <style>
        :host { display: flex; flex-direction: column; position: relative; min-height: 100vh; box-sizing: border-box; margin: 0 46px; padding: 2px 0; }
        main { display: flex; flex: 1; min-height: 200px; }
        tool-tip { position: absolute; left: 25px; top: 71px; width: 45px; height: 28px; }
        .cursor { position: absolute; left: 37px; top: 56px; }
      </style>
      <title-bar></title-bar>
      <ribbon-bar></ribbon-bar>
      <main>
        <model-tree></model-tree>
        <model-view></model-view>
      </main>
      <status-bar></status-bar>
      <task-bar></task-bar>
      <tool-tip>删除选定特征。</tool-tip>
      <ui-icon class="cursor" name="cursor"></ui-icon>`;
  }
}
customElements.define('creo-app', CreoApp);
</script>
</body>
</html>
